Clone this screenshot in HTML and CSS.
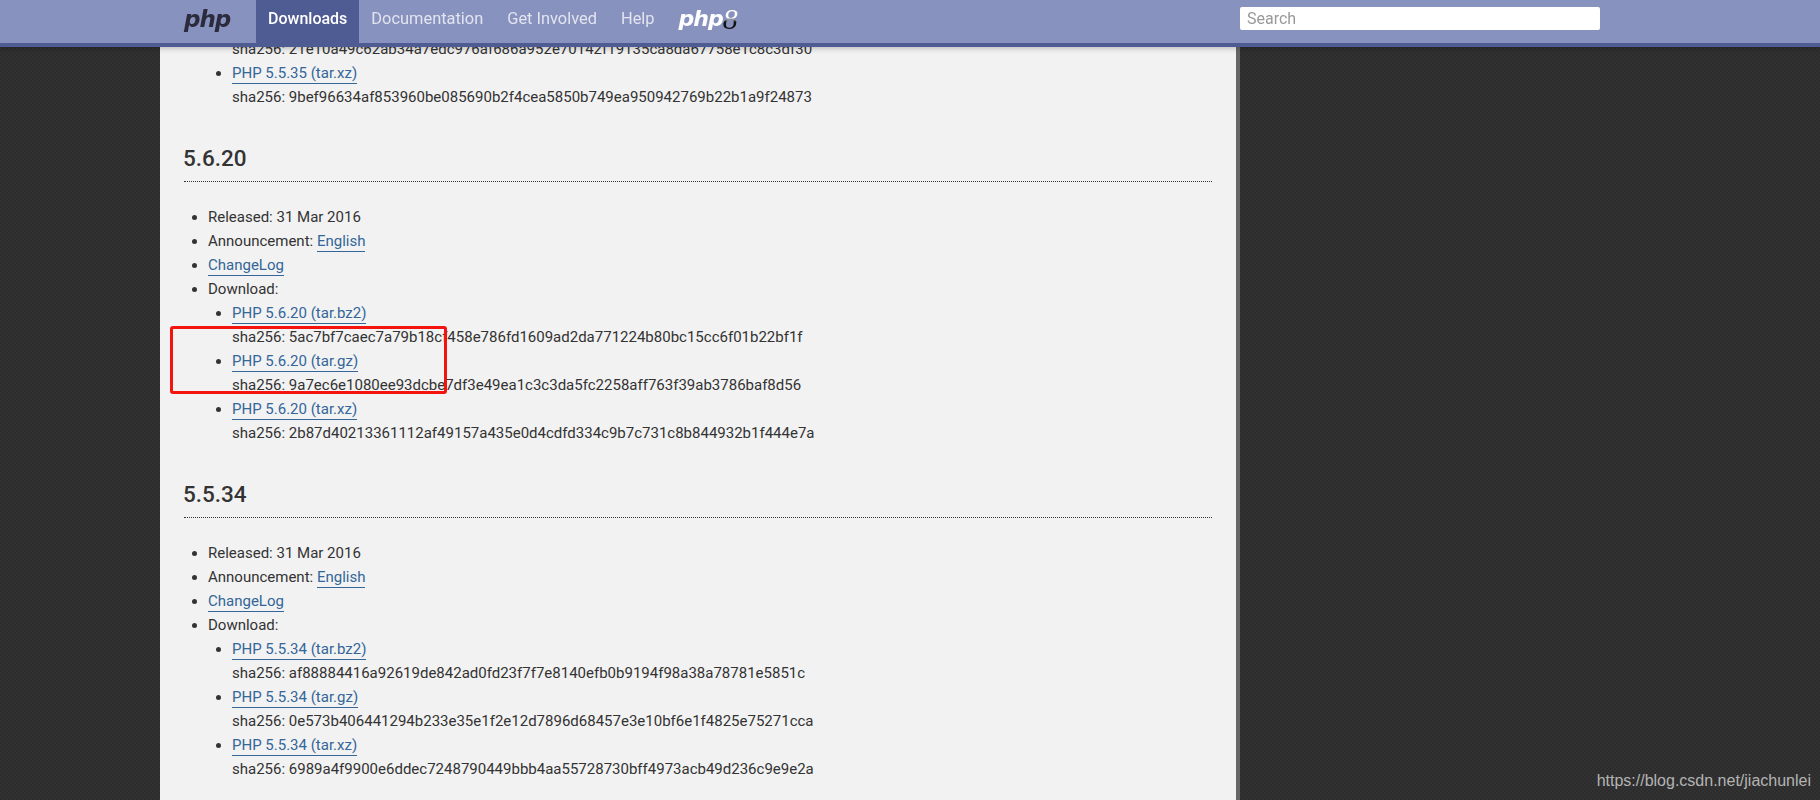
FILE: index.html
```html
<!DOCTYPE html>
<html lang="en">
<head>
    <meta charset="UTF-8">
    <meta name="viewport" content="width=device-width, initial-scale=1.0">
    <title>PHP: Releases</title>
    <link rel="stylesheet" href="styles.css">
</head>
<body>
    <header class="navbar">
        <span class="brand">php</span>
        <nav class="menu">
            <a class="active" href="#">Downloads</a>
            <a href="#">Documentation</a>
            <a href="#">Get Involved</a>
            <a href="#">Help</a>
        </nav>
        <span class="brand-8"><span class="brand-8-php">php</span><span class="brand-8-num">8</span></span>
        <input class="search" type="text" placeholder="Search">
    </header>

    <div class="layout">
        <main class="content">
            <ul class="releases cut-off">
                <li>
                    <ul>
                        <li class="no-marker"><div>sha256: 21e10a49c62ab34a7edc976af686a952e70142f19135ca8da67758e1c8c3df30</div></li>
                        <li><a href="#">PHP 5.5.35 (tar.xz)</a><div>sha256: 9bef96634af853960be085690b2f4cea5850b749ea950942769b22b1a9f24873</div></li>
                    </ul>
                </li>
            </ul>

            <h3>5.6.20</h3>
            <ul class="releases">
                <li>Released: 31 Mar 2016</li>
                <li>Announcement: <a href="#">English</a></li>
                <li><a href="#">ChangeLog</a></li>
                <li>Download:
                    <ul>
                        <li><a href="#">PHP 5.6.20 (tar.bz2)</a><div>sha256: 5ac7bf7caec7a79b18cf458e786fd1609ad2da771224b80bc15cc6f01b22bf1f</div></li>
                        <li><a href="#">PHP 5.6.20 (tar.gz)</a><div>sha256: 9a7ec6e1080ee93dcbe7df3e49ea1c3c3da5fc2258aff763f39ab3786baf8d56</div></li>
                        <li><a href="#">PHP 5.6.20 (tar.xz)</a><div>sha256: 2b87d40213361112af49157a435e0d4cdfd334c9b7c731c8b844932b1f444e7a</div></li>
                    </ul>
                </li>
            </ul>

            <h3>5.5.34</h3>
            <ul class="releases">
                <li>Released: 31 Mar 2016</li>
                <li>Announcement: <a href="#">English</a></li>
                <li><a href="#">ChangeLog</a></li>
                <li>Download:
                    <ul>
                        <li><a href="#">PHP 5.5.34 (tar.bz2)</a><div>sha256: af88884416a92619de842ad0fd23f7f7e8140efb0b9194f98a38a78781e5851c</div></li>
                        <li><a href="#">PHP 5.5.34 (tar.gz)</a><div>sha256: 0e573b406441294b233e35e1f2e12d7896d68457e3e10bf6e1f4825e75271cca</div></li>
                        <li><a href="#">PHP 5.5.34 (tar.xz)</a><div>sha256: 6989a4f9900e6ddec7248790449bbb4aa55728730bff4973acb49d236c9e9e2a</div></li>
                    </ul>
                </li>
            </ul>
        </main>
    </div>

    <div class="highlight-box"></div>
    <div class="watermark">https://blog.csdn.net/jiachunlei</div>
</body>
</html>
```

FILE: styles.css
```css
html, body {
    height: 100%;
}

body {
    margin: 0;
    overflow: hidden;
    background-color: #2f2f2f;
    background-image: repeating-conic-gradient(#2c2c2c 0 25%, #323232 0 50%);
    background-size: 4px 4px;
    font-family: Roboto, sans-serif;
    font-size: 15px;
    line-height: 24px;
    color: #333;
}

.navbar {
    position: fixed;
    top: 0;
    left: 0;
    right: 0;
    height: 43px;
    display: flex;
    align-items: flex-start;
    padding: 0 220px 0 184px;
    background: #8892bf;
    border-bottom: 4px solid #4f5b93;
    box-shadow: 0 2px 5px rgba(0, 0, 0, 0.2);
}

.brand {
    width: 72px;
    font-family: "DejaVu Sans", sans-serif;
    font-size: 23px;
    font-weight: bold;
    font-style: italic;
    letter-spacing: -1px;
    line-height: 38px;
    color: #2b2b3d;
}

.menu {
    display: flex;
}

.menu a {
    height: 43px;
    padding: 0 12px;
    font-size: 16.4px;
    line-height: 38px;
    color: #e2e4ef;
    text-decoration: none;
    border: none;
}

.menu a.active {
    background: #4f5b93;
    color: #fff;
    font-size: 16px;
    font-weight: 500;
}

.brand-8 {
    display: flex;
    margin-left: 12px;
    line-height: 38px;
}

.brand-8-php {
    font-family: "DejaVu Sans", sans-serif;
    font-size: 22px;
    font-weight: bold;
    font-style: italic;
    letter-spacing: -1px;
    color: #fff;
}

.brand-8-num {
    font-family: "Liberation Serif", serif;
    font-size: 30px;
    font-style: italic;
    background: linear-gradient(#fff 46%, #111 58%);
    -webkit-background-clip: text;
    background-clip: text;
    color: transparent;
}

.search {
    box-sizing: border-box;
    width: 360px;
    height: 23px;
    margin: 7px 0 0 auto;
    padding: 0 7px;
    border: none;
    border-radius: 2px;
    background: #fff;
    font-family: Roboto, sans-serif;
    font-size: 16px;
}

.search::placeholder {
    color: #999;
}

.layout {
    min-height: 100%;
    padding-left: 160px;
}

.content {
    box-sizing: border-box;
    width: 1080px;
    min-height: 100vh;
    padding: 37px 24px 0;
    background: #f2f2f2;
    border-right: 4px solid #666;
}

h3 {
    margin: 0 0 23px;
    padding-top: 2px;
    font-size: 22.5px;
    font-weight: 500;
    line-height: 46px;
    text-indent: -1px;
    color: #333;
    border-bottom: 1px dotted #333;
}

ul {
    margin: 0;
    padding-left: 24px;
    list-style: disc;
}

.releases {
    margin-bottom: 24px;
}

.cut-off > li,
.no-marker {
    list-style: none;
}

a {
    padding-bottom: 1px;
    color: #369;
    text-decoration: none;
    border-bottom: 1px solid #369;
}

.highlight-box {
    position: absolute;
    left: 170px;
    top: 326px;
    width: 277px;
    height: 68px;
    box-sizing: border-box;
    border: 3px solid #f5130d;
    border-radius: 3px;
}

.watermark {
    position: absolute;
    right: 9px;
    top: 769px;
    font-family: "Liberation Sans", sans-serif;
    font-size: 16px;
    color: #b4b4b4;
}
```
